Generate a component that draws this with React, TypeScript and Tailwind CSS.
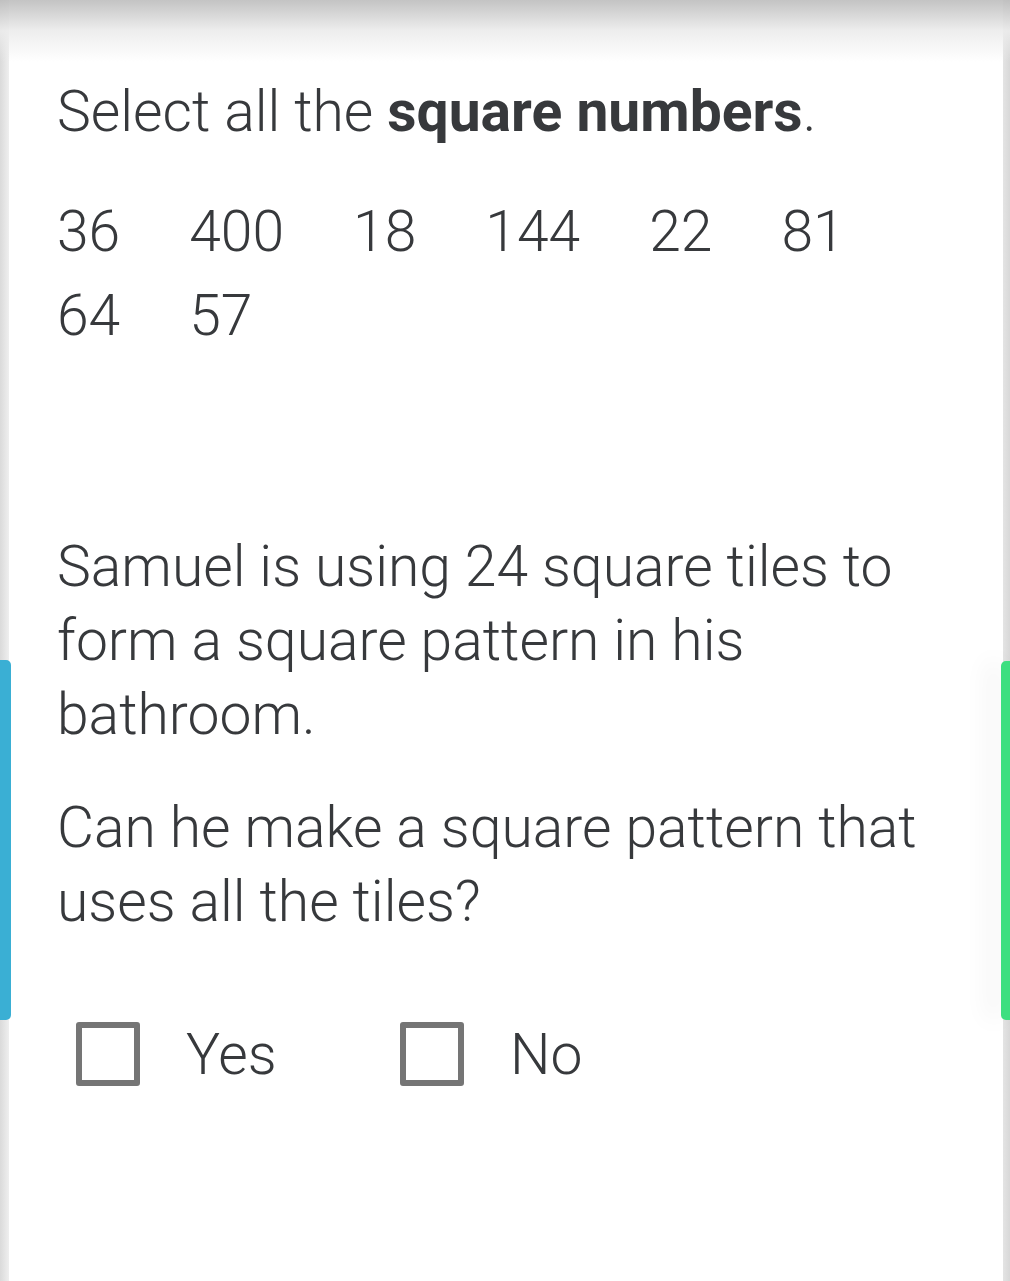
export default function App() {
  const numbers = ["36", "400", "18", "144", "22", "81", "64", "57"];

  return (
    <div className="relative w-[1010px] h-[1281px] overflow-hidden bg-[#e6e6e6] font-['Roboto','Liberation_Sans',sans-serif] font-light text-[#37393c]">
      <div className="flex h-full">
        <div className="w-[9px] bg-gradient-to-r from-[#dadada] to-[#efefef]" />
        <div className="flex-1 bg-white px-[48px] pt-[75px]">
          <p className="text-[57px] leading-[74px]">
            Select all the <span className="font-bold">square numbers</span>.
          </p>

          <div className="mt-[46px] flex flex-wrap gap-x-[69px] gap-y-[10px] text-[57px] leading-[74px]">
            {numbers.map((n) => (
              <span key={n}>{n}</span>
            ))}
          </div>

          <p className="mt-[177px] text-[57px] leading-[74px]">
            Samuel is using 24 square tiles to form a square pattern in his bathroom.
          </p>
          <p className="mt-[39px] text-[57px] leading-[74px]">
            Can he make a square pattern that uses all the tiles?
          </p>

          <div className="mt-[76px] ml-[19px] flex">
            {["Yes", "No"].map((opt) => (
              <label key={opt} className="flex w-[324px] items-center gap-[46px]">
                <span className="block h-[64px] w-[64px] rounded-[3px] border-[6px] border-[#757575]" />
                <span className="mt-[3px] text-[57px] leading-[74px]">{opt}</span>
              </label>
            ))}
          </div>
        </div>
        <div className="w-[7px] bg-gradient-to-r from-[#e4e4e4] to-[#d8d8d8]" />
      </div>

      {/* header shadow */}
      <div className="pointer-events-none absolute inset-x-0 top-0 h-[62px] bg-gradient-to-b from-[#bdbdbd] via-[#ececec] to-transparent opacity-90" />

      {/* side tabs */}
      <div className="absolute left-0 top-[660px] h-[360px] w-[11px] rounded-r-[5px] bg-[#3aafd4]" />
      <div className="absolute right-0 top-[661px] h-[359px] w-[9px] rounded-l-[5px] bg-[#3ddf80] shadow-[-12px_0_24px_rgba(0,0,0,0.08)]" />
    </div>
  );
}
